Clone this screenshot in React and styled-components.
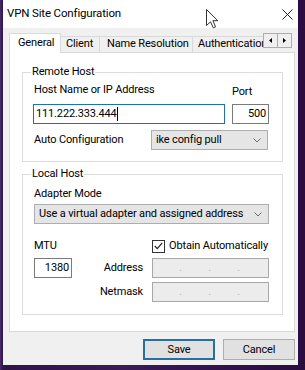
import React from "react";
import styled, { createGlobalStyle } from "styled-components";

const Global = createGlobalStyle`
  html, body { margin: 0; padding: 0; }
  body {
    width: 305px; height: 370px; overflow: hidden;
    background: linear-gradient(90deg, #4a2a6e 0px, #2e1248 3px, #3a1a58 120px, #2a0c40 305px);
    font-family: Roboto, "Liberation Sans", Arial, sans-serif;
    font-size: 11px;
    letter-spacing: -0.15px;
    color: #000;
  }
`;

const Desktop = styled.div`
  position: relative;
  height: 370px;
  padding-left: 3px;
`;

const Window = styled.div`
  width: 295px;
  height: 365px;
  background: #f0f0f0;
  display: flex;
  flex-direction: column;
`;

const TitleBar = styled.div`
  height: 28px;
  background: #ffffff;
  display: flex;
  align-items: center;
  justify-content: space-between;
  padding: 0 5px 0 4px;
  box-sizing: border-box;
`;

const Title = styled.span`
  font-size: 11.5px;
  line-height: 14px;
  margin-top: -2px;
`;

const Body = styled.div`
  padding: 5px 3px 0 6px;
  display: flex;
  flex-direction: column;
`;

const TabStrip = styled.div`
  display: flex;
  align-items: flex-end;
  height: 19px;
`;

const TabsViewport = styled.div`
  display: flex;
  align-items: flex-end;
  width: 254px;
  height: 20px;
  overflow: hidden;
  position: relative;
  z-index: 1;
  align-self: flex-start;
`;

const Tab = styled.div`
  flex: 0 0 auto;
  box-sizing: border-box;
  width: ${(p) => p.$w}px;
  height: ${(p) => (p.$active ? 20 : 16)}px;
  margin-top: auto;
  margin-bottom: ${(p) => (p.$active ? 0 : 1)}px;
  background: ${(p) => (p.$active ? "#ffffff" : "#f0f0f0")};
  border-top: 1px solid #d9d9d9;
  border-right: 1px solid #d9d9d9;
  border-left: ${(p) => (p.$active ? "1px solid #d9d9d9" : "none")};
  padding-left: ${(p) => p.$pl}px;
  line-height: ${(p) => (p.$active ? 18 : 14)}px;
  white-space: nowrap;
  overflow: hidden;
`;

const Spin = styled.div`
  display: flex;
  align-self: flex-start;
`;

const SpinButton = styled.div`
  width: 15px;
  height: 15px;
  box-sizing: border-box;
  border: 1px solid #adadad;
  background: #f0f0f0;
  display: flex;
  align-items: center;
  justify-content: center;
  & + & { border-left: none; width: 14px; }
`;

const Panel = styled.div`
  height: 280px;
  box-sizing: border-box;
  background: #ffffff;
  border: 1px solid #d9d9d9;
  padding-top: 19px;
`;

const Group = styled.div`
  position: relative;
  width: 261px;
  box-sizing: border-box;
  margin-left: 12px;
  margin-top: ${(p) => p.$mt || 0}px;
  border: 1px solid #dcdcdc;
  padding: ${(p) => p.$pt}px 12px 11px ${(p) => p.$pl}px;
`;

const Legend = styled.span`
  position: absolute;
  top: -8px;
  left: 8px;
  padding: 0 1px;
  background: #ffffff;
  line-height: 14px;
`;

const Label = styled.div`
  line-height: ${(p) => p.$lh || 14}px;
  padding-left: ${(p) => p.$pl || 0}px;
  margin-top: ${(p) => p.$mt || 0}px;
  text-align: ${(p) => p.$align || "left"};
  padding-right: ${(p) => p.$pr || 0}px;
  width: ${(p) => (p.$w ? `${p.$w}px` : "auto")};
  box-sizing: border-box;
  white-space: nowrap;
`;

const HostGrid = styled.div`
  display: grid;
  grid-template-columns: 192px 37px;
  column-gap: 7px;
  row-gap: 5px;
`;

const TextBox = styled.div`
  height: 20px;
  box-sizing: border-box;
  border: 1px solid ${(p) => (p.$focus ? "#1f73ad" : "#7a7a7a")};
  background: #ffffff;
  display: flex;
  align-items: center;
  justify-content: ${(p) => (p.$right ? "flex-end" : "flex-start")};
  padding: 0 2px;
  line-height: 14px;
`;

const Caret = styled.span`
  display: inline-block;
  width: 1px;
  height: 14px;
  background: #000;
`;

const Row = styled.div`
  display: flex;
  align-items: center;
  margin-top: ${(p) => p.$mt || 0}px;
`;

const Combo = styled.div`
  width: ${(p) => p.$w}px;
  height: 20px;
  box-sizing: border-box;
  border: 1px solid #adadad;
  background: #e5e5e5;
  display: flex;
  align-items: center;
  justify-content: space-between;
  padding: 0 6px 0 4px;
  line-height: 14px;
  white-space: nowrap;
`;

const LocalGrid = styled.div`
  display: grid;
  grid-template-columns: 38px 80px 117px;
  grid-template-rows: 14px 20px 20px;
  row-gap: 5px;
  margin-top: 15px;
  & > :nth-child(n + 7) { margin-top: -1px; }
`;

const CheckRow = styled.label`
  display: flex;
  align-items: center;
  gap: 4px;
  line-height: 14px;
  white-space: nowrap;
`;

const CheckBox = styled.span`
  width: 13px;
  height: 13px;
  box-sizing: border-box;
  border: 1px solid #333333;
  background: #ffffff;
  display: flex;
  align-items: center;
  justify-content: center;
`;

const IpField = styled.div`
  height: 20px;
  box-sizing: border-box;
  border: 1px solid #a8a8a8;
  background: #ececec;
  display: grid;
  grid-template-columns: repeat(3, 29px) 1fr;
  color: #b4b4b4;
  line-height: 18px;
`;

const IpSeg = styled.span`
  text-align: right;
`;

const ButtonRow = styled.div`
  display: flex;
  justify-content: flex-end;
  gap: 8px;
  margin-top: 7px;
`;

const Button = styled.div`
  width: 72px;
  height: 21px;
  box-sizing: border-box;
  border: ${(p) => (p.$default ? "2px solid #2a6f9c" : "1px solid #adadad")};
  background: #e1e1e1;
  display: flex;
  align-items: center;
  justify-content: center;
  line-height: 14px;
`;

const Cursor = styled.svg`
  position: absolute;
  left: 206px;
  top: 9px;
`;

const Chevron = () => (
  <svg width="8" height="5" viewBox="0 0 8 5">
    <path d="M0.5 0.5 L4 4 L7.5 0.5" fill="none" stroke="#6a6a6a" strokeWidth="1" />
  </svg>
);

export default function App() {
  return (
    <>
      <Global />
      <Desktop>
        <Window>
          <TitleBar>
            <Title>VPN Site Configuration</Title>
            <svg width="11" height="11" viewBox="0 0 11 11">
              <path d="M0.5 0.5 L10.5 10.5 M10.5 0.5 L0.5 10.5" stroke="#222" strokeWidth="1" />
            </svg>
          </TitleBar>
          <Body>
            <TabStrip>
              <TabsViewport>
                <Tab $active $w={52} $pl={8}>General</Tab>
                <Tab $w={39} $pl={5}>Client</Tab>
                <Tab $w={93} $pl={7}>Name Resolution</Tab>
                <Tab $w={80} $pl={5}>Authentication</Tab>
              </TabsViewport>
              <Spin>
                <SpinButton>
                  <svg width="3" height="5" viewBox="0 0 3 5"><path d="M3 0 L0 2.5 L3 5 Z" fill="#000" /></svg>
                </SpinButton>
                <SpinButton>
                  <svg width="3" height="5" viewBox="0 0 3 5"><path d="M0 0 L3 2.5 L0 5 Z" fill="#000" /></svg>
                </SpinButton>
              </Spin>
            </TabStrip>
            <Panel>
              <Group $pt={10} $pl={10}>
                <Legend>Remote Host</Legend>
                <HostGrid>
                  <Label $pl={1}>Host Name or IP Address</Label>
                  <Label $mt={2}>Port</Label>
                  <TextBox $focus>
                    111.222.333.444<Caret />
                  </TextBox>
                  <TextBox $right>500</TextBox>
                </HostGrid>
                <Row $mt={6}>
                  <Label $pl={1} $w={118}>Auto Configuration</Label>
                  <Combo $w={117}>
                    ike config pull
                    <Chevron />
                  </Combo>
                </Row>
              </Group>
              <Group $mt={12} $pt={12} $pl={11}>
                <Legend>Local Host</Legend>
                <Label>Adapter Mode</Label>
                <Row $mt={3}>
                  <Combo $w={235}>
                    Use a virtual adapter and assigned address
                    <Chevron />
                  </Combo>
                </Row>
                <LocalGrid>
                  <Label>MTU</Label>
                  <span />
                  <CheckRow>
                    <CheckBox>
                      <svg width="9" height="8" viewBox="0 0 9 8">
                        <path d="M0.8 4 L3.3 6.6 L8.2 0.8" fill="none" stroke="#222" strokeWidth="1.2" />
                      </svg>
                    </CheckBox>
                    Obtain Automatically
                  </CheckRow>
                  <TextBox $right>1380</TextBox>
                  <Label $align="right" $pr={9} $lh={20}>Address</Label>
                  <IpField>
                    <IpSeg>.</IpSeg><IpSeg>.</IpSeg><IpSeg>.</IpSeg><span />
                  </IpField>
                  <span />
                  <Label $align="right" $pr={9} $lh={20}>Netmask</Label>
                  <IpField>
                    <IpSeg>.</IpSeg><IpSeg>.</IpSeg><IpSeg>.</IpSeg><span />
                  </IpField>
                </LocalGrid>
              </Group>
            </Panel>
            <ButtonRow>
              <Button $default>Save</Button>
              <Button>Cancel</Button>
            </ButtonRow>
          </Body>
        </Window>
        <Cursor width="13" height="20" viewBox="0 0 13 20">
          <path d="M0.5 0.5 V16.5 L4.5 12.8 L7.3 18.8 L9.6 17.8 L6.9 11.7 H11.8 Z" fill="#ffffff" stroke="#333" strokeWidth="1" strokeLinejoin="round" />
        </Cursor>
      </Desktop>
    </>
  );
}
